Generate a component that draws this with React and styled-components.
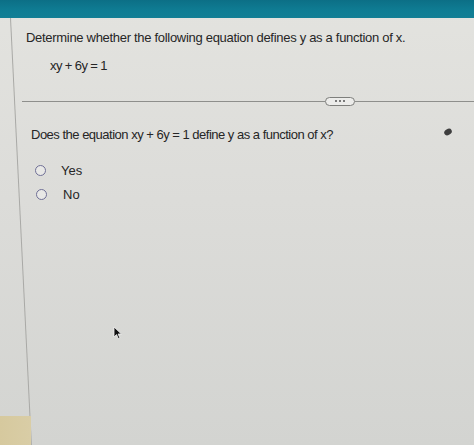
import React from "react";
import styled, { createGlobalStyle } from "styled-components";

const Global = createGlobalStyle`
  html, body { margin: 0; padding: 0; }
  body {
    width: 474px;
    height: 445px;
    overflow: hidden;
    font-family: "Liberation Sans", Arial, sans-serif;
    color: #262626;
  }
`;

const Page = styled.div`
  width: 474px;
  height: 445px;
  display: flex;
  flex-direction: column;
  background: linear-gradient(180deg, #e3e3df 0%, #dcdcd9 45%, #d3d4d1 100%);
`;

const Header = styled.div`
  height: 18px;
  flex: none;
  background: linear-gradient(180deg, #0c6f86 0%, #0f7d94 60%, #127f95 100%);
`;

const Body = styled.div`
  flex: 1;
  display: flex;
  position: relative;

  &::before {
    content: "";
    position: absolute;
    left: 10px;
    top: 0;
    width: 1px;
    height: 100%;
    background: #a9a9a6;
    transform-origin: top left;
    transform: skewX(2.8deg);
  }

  &::after {
    content: "";
    position: absolute;
    left: 0;
    bottom: 0;
    width: 31px;
    height: 29px;
    background: linear-gradient(90deg, #d6c99e, #d9cda6);
  }
`;

const Gutter = styled.div`
  width: 12px;
  flex: none;
`;

const Main = styled.div`
  flex: 1;
  display: flex;
  flex-direction: column;
  padding-top: 12px;
`;

const Text = styled.div`
  font-size: 13px;
  line-height: 16px;
  letter-spacing: ${(p) => p.$ls || 0}px;
  padding-left: ${(p) => p.$indent}px;
  margin-top: ${(p) => p.$gap || 0}px;
  white-space: nowrap;
`;

const Divider = styled.div`
  margin-top: 22px;
  margin-left: 10px;
  height: 10px;
  display: flex;
  align-items: center;
`;

const Line = styled.div`
  height: 1px;
  background: #8e8f8c;
  flex: ${(p) => (p.$grow ? 1 : "none")};
  width: ${(p) => (p.$grow ? "auto" : `${p.$w}px`)};
`;

const Pill = styled.button`
  width: 30px;
  height: 9px;
  box-sizing: border-box;
  border: 1px solid #7e7f7c;
  border-radius: 5px;
  background: #ececea;
  padding: 0;
  display: flex;
  align-items: center;
  justify-content: center;
  gap: 2px;
`;

const Dot = styled.span`
  width: 2px;
  height: 2px;
  border-radius: 50%;
  background: #555;
`;

const Options = styled.div`
  margin-top: 19px;
  display: flex;
  flex-direction: column;
  gap: 8px;
`;

const Option = styled.label`
  display: flex;
  align-items: center;
  height: 16px;
  padding-left: ${(p) => p.$indent}px;
  font-size: 13px;
`;

const Radio = styled.span`
  width: 11px;
  height: 11px;
  box-sizing: border-box;
  border: 1.5px solid #6f6f96;
  border-radius: 50%;
  background: #e8e8e6;
  flex: none;
`;

const OptionLabel = styled.span`
  margin-left: ${(p) => p.$gap}px;
`;

const Speck = styled.span`
  position: absolute;
  left: 444px;
  top: 111px;
  width: 8px;
  height: 6px;
  border-radius: 50%;
  background: #3e3e3e;
  transform: rotate(-30deg);
`;

const Cursor = styled.svg`
  position: absolute;
  left: 113px;
  top: 308px;
`;

export default function App() {
  return (
    <>
      <Global />
      <Page>
        <Header />
        <Body>
          <Gutter />
          <Main>
            <Text $indent={14} $ls={-0.3}>
              Determine whether the following equation defines y as a function of x.
            </Text>
            <Text $indent={38} $gap={12} $ls={-0.6}>
              xy + 6y = 1
            </Text>
            <Divider>
              <Line $w={303} />
              <Pill aria-label="more">
                <Dot />
                <Dot />
                <Dot />
              </Pill>
              <Line $grow />
            </Divider>
            <Text $indent={19} $gap={21} $ls={-0.5}>
              Does the equation xy + 6y = 1 define y as a function of x?
            </Text>
            <Options>
              <Option $indent={23}>
                <Radio />
                <OptionLabel $gap={15}>Yes</OptionLabel>
              </Option>
              <Option $indent={24}>
                <Radio />
                <OptionLabel $gap={16}>No</OptionLabel>
              </Option>
            </Options>
          </Main>
          <Speck />
          <Cursor width="10" height="14" viewBox="0 0 10 14">
            <path d="M1 1 L1 11 L3.5 8.6 L5.3 12.6 L6.9 11.9 L5.1 8 L8.4 8 Z" fill="#111" stroke="#f2f2f2" strokeWidth="0.8" />
          </Cursor>
        </Body>
      </Page>
    </>
  );
}
